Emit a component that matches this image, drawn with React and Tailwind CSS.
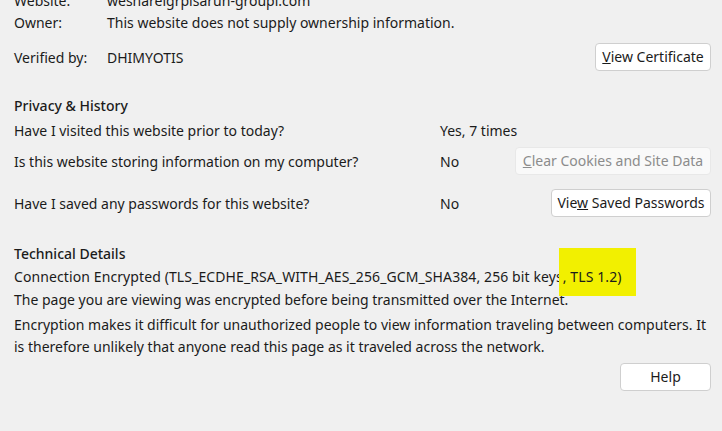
import React from "react";

const Btn = ({ children, disabled, className = "" }) => (
  <button
    className={
      "h-[28px] rounded-[4px] border text-[14px] leading-none " +
      (disabled
        ? "border-[#e8e8e8] bg-[#f9f9f9] text-[#8c8c8c] "
        : "border-[#cfcfcf] bg-white text-[#1b1b1b] ") +
      className
    }
  >
    {children}
  </button>
);

const Row = ({ label, value, labelW, children, className = "" }) => (
  <div className={"flex items-center " + className}>
    <div className={"shrink-0 " + labelW}>{label}</div>
    <div className="flex-1">{value}</div>
    {children}
  </div>
);

export default function App() {
  return (
    <div
      className="h-[431px] w-[722px] overflow-hidden bg-[#f0f0f0] pl-[14px] pr-[11px] text-[14px] text-[#1b1b1b]"
      style={{ fontFamily: '"Noto Sans", sans-serif' }}
    >
      <Row label="Website:" value="weshareigrpisarun-groupl.com" labelW="w-[93px]" className="-mt-[11px] h-[22px]" />
      <Row label="Owner:" value="This website does not supply ownership information." labelW="w-[93px]" className="h-[22px]" />
      <Row label="Verified by:" value="DHIMYOTIS" labelW="w-[93px]" className="mt-[10px] h-[28px]">
        <Btn className="w-[116px]">
          <u>V</u>iew Certificate
        </Btn>
      </Row>

      <div className="mt-[23px] flex h-[22px] items-center font-medium">Privacy &amp; History</div>
      <Row label="Have I visited this website prior to today?" value="Yes, 7 times" labelW="w-[426px]" className="mt-[3px] h-[22px]" />
      <Row label="Is this website storing information on my computer?" value="No" labelW="w-[426px]" className="mt-[6px] h-[28px]">
        <Btn disabled className="w-[196px]">
          <u>C</u>lear Cookies and Site Data
        </Btn>
      </Row>
      <Row label="Have I saved any passwords for this website?" value="No" labelW="w-[426px]" className="mt-[14px] h-[28px]">
        <Btn className="w-[160px]">
          Vie<u>w</u> Saved Passwords
        </Btn>
      </Row>

      <div className="mt-[25px] flex h-[22px] items-center font-medium">Technical Details</div>
      <div className="mt-[1px] flex h-[22px] items-center tracking-[0.1px]">
        <span>
          Connection Encrypted (TLS_ECDHE_RSA_WITH_AES_256_GCM_SHA384, 256 bit keys
          <span className="relative">
            <span className="absolute -bottom-[10px] -left-[4px] -right-[14px] -top-[19px] bg-[#f2f000]" />
            <span className="relative">, TLS 1.2)</span>
          </span>
        </span>
      </div>
      <div className="mt-[1px] flex h-[22px] items-center">
        The page you are viewing was encrypted before being transmitted over the Internet.
      </div>
      <p className="-mr-[4px] mt-[4px] leading-[22px]">
        Encryption makes it difficult for unauthorized people to view information traveling between computers. It is
        therefore unlikely that anyone read this page as it traveled across the network.
      </p>
      <div className="mt-[5px] flex justify-end">
        <Btn className="w-[91px]">Help</Btn>
      </div>
    </div>
  );
}
